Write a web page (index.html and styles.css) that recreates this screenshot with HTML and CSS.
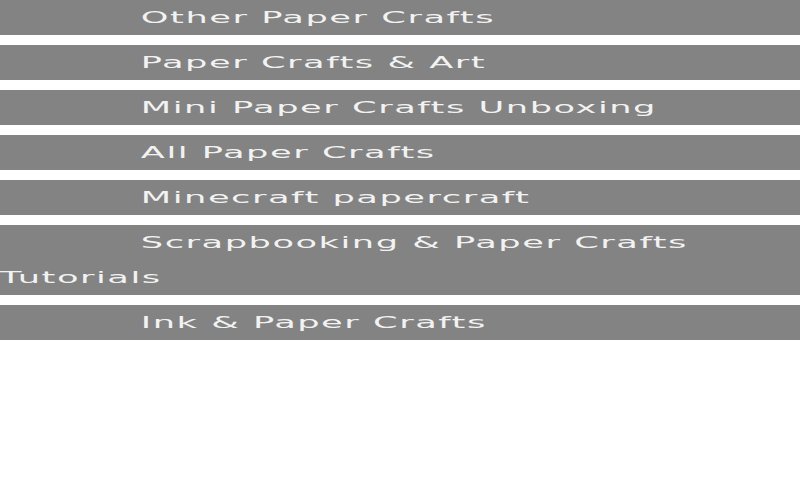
FILE: index.html
```html
<!DOCTYPE html>
<html lang="en">
<head>
  <meta charset="UTF-8">
  <meta name="viewport" content="width=device-width, initial-scale=1.0">
  <title>Paper Crafts</title>
  <link rel="stylesheet" href="styles.css">
</head>
<body>
  <ul class="menu">
    <li class="item">Other Paper Crafts</li>
    <li class="item">Paper Crafts &amp; Art</li>
    <li class="item">Mini Paper Crafts Unboxing</li>
    <li class="item">All Paper Crafts</li>
    <li class="item">Minecraft papercraft</li>
    <li class="item">Scrapbooking &amp; Paper Crafts Tutorials</li>
    <li class="item">Ink &amp; Paper Crafts</li>
  </ul>
</body>
</html>
```

FILE: styles.css
```css
* {
  box-sizing: border-box;
}

body {
  margin: 0;
  background-color: #ffffff;
  overflow: hidden;
}

/* the list is drawn narrow and stretched sideways, like the original */
.menu {
  list-style: none;
  margin: 0;
  padding: 0;
  width: 364px;
  transform: scaleX(2.2);
  transform-origin: 0 0;
  font-family: "DejaVu Sans", sans-serif;
  font-size: 16px;
  letter-spacing: 0.7px;
  color: #f2f2f2;
}

.item {
  background-color: #838383;
  line-height: 35px;
  text-indent: 64px;
  margin-bottom: 10px;
}
```
